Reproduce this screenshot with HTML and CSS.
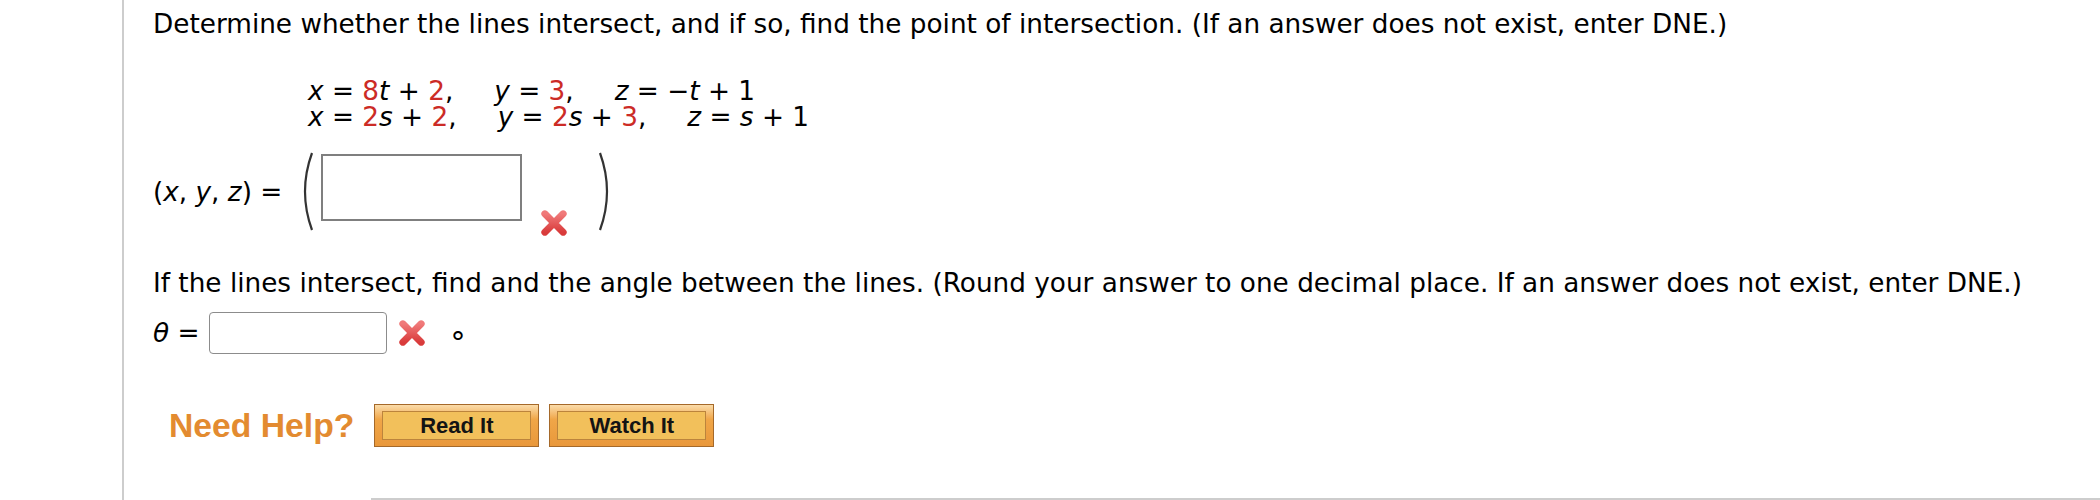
FILE: index.html
```html
<!DOCTYPE html>
<html lang="en">
<head>
<meta charset="utf-8">
<title>Lines intersection</title>
<link rel="stylesheet" href="styles.css">
</head>
<body>
<div class="page">
  <div class="question">
    <p class="prompt">Determine whether the lines intersect, and if so, find the point of intersection. (If an answer does not exist, enter DNE.)</p>
    <div class="eqs">
      <div class="eq-line"><span class="term"><i>x</i> = <span class="r">8</span><i>t</i> + <span class="r">2</span>,</span><span class="term"><i>y</i> = <span class="r">3</span>,</span><span class="term"><i>z</i> = −<i>t</i> + 1</span></div>
      <div class="eq-line"><span class="term"><i>x</i> = <span class="r">2</span><i>s</i> + <span class="r">2</span>,</span><span class="term"><i>y</i> = <span class="r">2</span><i>s</i> + <span class="r">3</span>,</span><span class="term"><i>z</i> = <i>s</i> + 1</span></div>
    </div>
    <div class="answer-row point">
      <span class="label">(<i>x</i>, <i>y</i>, <i>z</i>) =</span>
      <svg class="paren" width="18" height="81" viewBox="0 0 18 81"><path d="M15 2 Q1 40.5 15 79" fill="none" stroke="#333" stroke-width="2.2"/></svg>
      <span class="box box-square"></span>
      <svg class="xmark xmark-low" width="28" height="28" viewBox="0 0 26 26"><defs><linearGradient id="xg1" x1="0" y1="0" x2="0" y2="1"><stop offset="0" stop-color="#f07a7a"/><stop offset="1" stop-color="#d93b3b"/></linearGradient></defs><path d="M4.5 4.5 L21.5 21.5 M21.5 4.5 L4.5 21.5" stroke="url(#xg1)" stroke-width="6.5" stroke-linecap="round"/></svg>
      <svg class="paren" width="18" height="81" viewBox="0 0 18 81"><path d="M3 2 Q17 40.5 3 79" fill="none" stroke="#333" stroke-width="2.2"/></svg>
    </div>
    <p class="prompt q2">If the lines intersect, find and the angle between the lines. (Round your answer to one decimal place. If an answer does not exist, enter DNE.)</p>
    <div class="answer-row angle">
      <span class="label"><i>θ</i> =</span>
      <span class="box box-round"></span>
      <svg class="xmark" width="28" height="28" viewBox="0 0 26 26"><defs><linearGradient id="xg2" x1="0" y1="0" x2="0" y2="1"><stop offset="0" stop-color="#f07a7a"/><stop offset="1" stop-color="#d93b3b"/></linearGradient></defs><path d="M4.5 4.5 L21.5 21.5 M21.5 4.5 L4.5 21.5" stroke="url(#xg2)" stroke-width="6.5" stroke-linecap="round"/></svg>
      <span class="degree">°</span>
    </div>
    <div class="help">
      <span class="need-help">Need Help?</span>
      <span class="btn"><span class="btn-face">Read It</span></span>
      <span class="btn"><span class="btn-face">Watch It</span></span>
    </div>
  </div>
  <div class="bottom-rule"></div>
</div>
</body>
</html>
```

FILE: styles.css
```css
html, body {
  margin: 0;
  padding: 0;
  background: #fff;
}
body {
  font-family: "DejaVu Sans", Verdana, sans-serif;
  color: #000;
}
.page {
  margin-left: 122px;
  border-left: 2px solid #cdcdcd;
  height: 500px;
  box-sizing: border-box;
  padding: 9px 0 0 29px;
  display: flex;
  flex-direction: column;
}
.question {
  flex: 1;
}
.prompt {
  margin: 0;
  font-size: 26.3px;
  line-height: 30px;
  white-space: nowrap;
}
.eqs {
  margin: 39px 0 0 155px;
  font-size: 26.3px;
  line-height: 26px;
}
.eq-line {
  white-space: nowrap;
}
.term + .term {
  margin-left: 41px;
}
.r {
  color: #cc2b26;
}
.answer-row {
  display: flex;
  align-items: center;
  font-size: 26.3px;
}
.point {
  margin-top: 21px;
  height: 81px;
}
.point .label {
  margin-right: 15px;
}
.paren {
  display: block;
}
.box {
  display: block;
  box-sizing: border-box;
}
.box-square {
  align-self: flex-start;
  width: 201px;
  height: 67px;
  border: 2px solid #7f7f7f;
  margin: 3px 18px 0 6px;
}
.xmark {
  display: block;
}
.xmark-low {
  align-self: flex-start;
  margin-top: 58px;
  margin-right: 29px;
}
.q2 {
  margin-top: 36px;
}
.angle {
  margin-top: 14px;
  height: 42px;
}
.angle .label {
  margin-right: 9px;
}
.box-round {
  width: 178px;
  height: 42px;
  border: 1px solid #8c8c8c;
  border-radius: 4px;
  margin-right: 11px;
}
.degree {
  margin-left: 25px;
  font-size: 30px;
  line-height: 30px;
  align-self: flex-start;
  padding-top: 16px;
}
.help {
  margin: 50px 0 0 16px;
  display: flex;
  align-items: center;
  gap: 10px;
}
.need-help {
  font-family: "Liberation Sans", Arial, sans-serif;
  font-weight: bold;
  font-size: 33.7px;
  color: #e38b30;
  margin-right: 10px;
}
.btn {
  display: block;
  width: 165px;
  height: 43px;
  box-sizing: border-box;
  border: 1px solid #a5692a;
  background: linear-gradient(#fbdcaa 0%, #f0a648 35%, #e9983b 100%);
  padding: 6px 7px;
}
.btn-face {
  display: flex;
  align-items: center;
  justify-content: center;
  height: 100%;
  box-sizing: border-box;
  border: 1px solid #bc843c;
  background: #f2c05b;
  font-family: "Liberation Sans", Arial, sans-serif;
  font-weight: bold;
  font-size: 22px;
  color: #141414;
}
.bottom-rule {
  height: 2px;
  background: #cdcdcd;
  margin-left: 218px;
}
```
